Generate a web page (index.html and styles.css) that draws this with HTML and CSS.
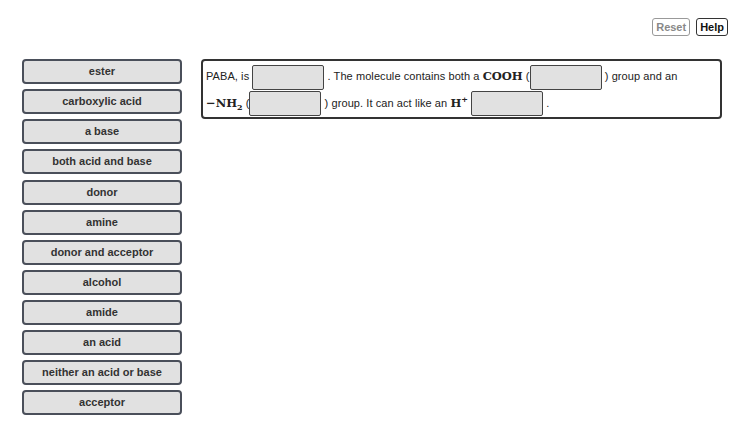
FILE: index.html
```html
<!DOCTYPE html>
<html>
<head>
    <title>PABA Labeling</title>
    <link rel="stylesheet" href="styles.css">
</head>
<body>
    <!-- top toolbar -->
    <div class="toolbar">
        <button class="tool-btn disabled">Reset</button>
        <button class="tool-btn">Help</button>
    </div>

    <div class="workspace">
        <!-- answer tiles to drag into the blanks -->
        <div class="tiles">
            <div class="tile">ester</div>
            <div class="tile">carboxylic acid</div>
            <div class="tile">a base</div>
            <div class="tile">both acid and base</div>
            <div class="tile">donor</div>
            <div class="tile">amine</div>
            <div class="tile">donor and acceptor</div>
            <div class="tile">alcohol</div>
            <div class="tile">amide</div>
            <div class="tile">an acid</div>
            <div class="tile">neither an acid or base</div>
            <div class="tile">acceptor</div>
        </div>

        <div class="sentence">
            PABA, is <span class="blank"></span> . The molecule contains both a <span class="math">COOH</span> (<span class="blank"></span> ) group and an<br>
            <span class="math">&minus;NH<sub>2</sub></span> (<span class="blank"></span> ) group. It can act like an <span class="math">H<sup>+</sup></span> <span class="blank"></span> .
        </div>
    </div>
</body>
</html>
```

FILE: styles.css
```css
html, body {
    margin: 0;
    background: white;
    font-family: "Liberation Sans", Arial, sans-serif;
    font-size: 11px;
    color: #222;
}

.toolbar {
    display: flex;
    justify-content: flex-end;
    gap: 6px;
    padding: 18px 10px 0 0;
    height: 22px;
}

.tool-btn {
    font-family: "Liberation Sans", Arial, sans-serif;
    font-size: 11px;
    font-weight: bold;
    background: white;
    color: #111;
    border: 1px solid #333;
    border-radius: 3px;
    padding: 0 3px;
    height: 18px;
}

.tool-btn.disabled {
    color: #888;
    border-color: #999;
}

.workspace {
    display: flex;
    align-items: flex-start;
    padding: 19px 0 0 22px;
    gap: 19px;
}

.tiles {
    display: flex;
    flex-direction: column;
    gap: 5.14px;
    width: 160px;
}

.tile {
    box-sizing: border-box;
    height: 25px;
    line-height: 21px;
    text-align: center;
    font-weight: bold;
    color: #333;
    background: #e1e1e1;
    border: 2px solid #4a4f5a;
    border-radius: 4px;
}

.sentence {
    box-sizing: border-box;
    width: 521px;
    border: 2px solid #333;
    border-radius: 4px;
    padding: 2px 3px 1px 3px;
    line-height: 26px;
    letter-spacing: 0.08px;
    color: #222;
}

.blank {
    display: inline-block;
    box-sizing: border-box;
    width: 72px;
    height: 25px;
    vertical-align: middle;
    background: #e1e1e1;
    border: 1px solid #444;
    border-radius: 2px;
}

.math {
    font-family: "DejaVu Serif", "Liberation Serif", serif;
    font-weight: bold;
    font-size: 11.5px;
    letter-spacing: 0;
}

.math sub, .math sup {
    font-size: 8px;
    line-height: 0;
}
```
